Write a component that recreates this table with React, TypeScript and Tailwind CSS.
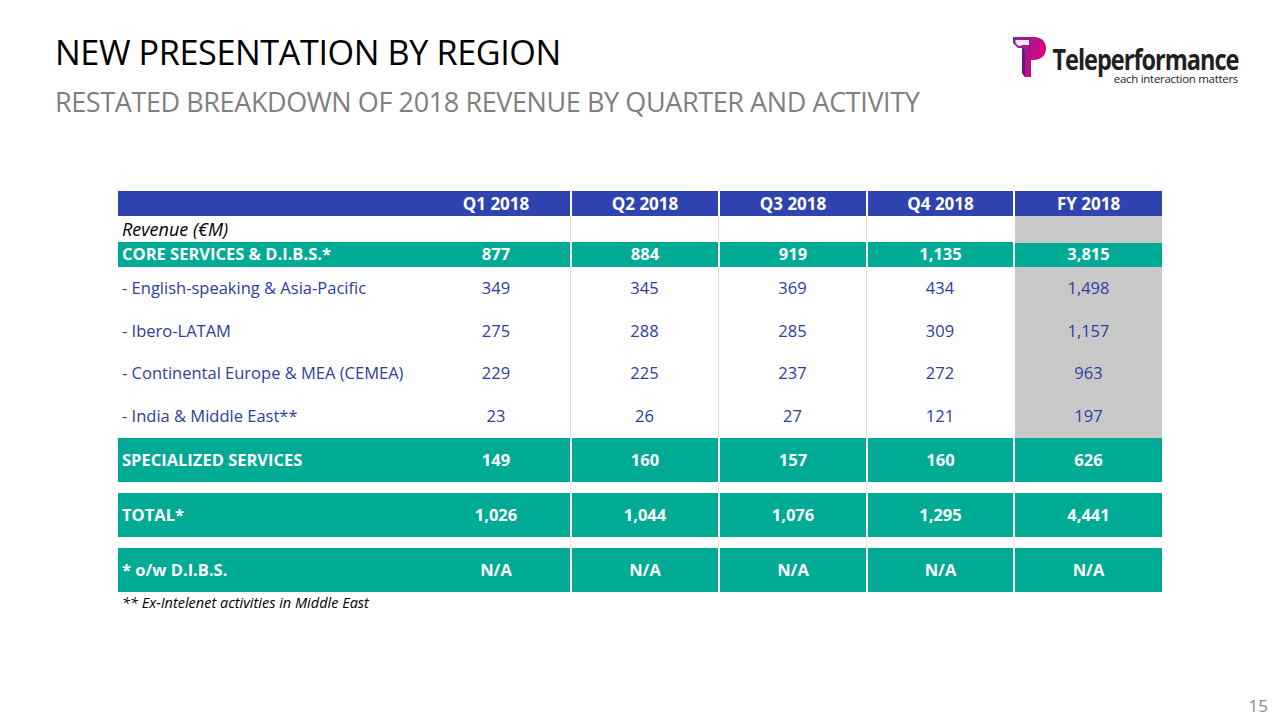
import React from 'react';

const TEAL = 'bg-[#00ab96]';

type Row = {
  label: string;
  values: string[];
  kind: 'teal' | 'plain';
  h: string;
};

const rows: Row[] = [
  { label: 'CORE SERVICES & D.I.B.S.*', values: ['877', '884', '919', '1,135', '3,815'], kind: 'teal', h: 'h-[25px]' },
  { label: '- English-speaking & Asia-Pacific', values: ['349', '345', '369', '434', '1,498'], kind: 'plain', h: 'h-[43px]' },
  { label: '- Ibero-LATAM', values: ['275', '288', '285', '309', '1,157'], kind: 'plain', h: 'h-[42px]' },
  { label: '- Continental Europe & MEA (CEMEA)', values: ['229', '225', '237', '272', '963'], kind: 'plain', h: 'h-[43px]' },
  { label: '- India & Middle East**', values: ['23', '26', '27', '121', '197'], kind: 'plain', h: 'h-[43px]' },
];

const totals = [
  { label: 'SPECIALIZED SERVICES', values: ['149', '160', '157', '160', '626'] },
  { label: 'TOTAL*', values: ['1,026', '1,044', '1,076', '1,295', '4,441'] },
  { label: '* o/w D.I.B.S.', values: ['N/A', 'N/A', 'N/A', 'N/A', 'N/A'] },
];

const cols = 'grid grid-cols-[304px_148px_148px_148px_147px_149px]';

function Logo() {
  return (
    <div className="flex items-start gap-[9px]">
      <svg width="35" height="42" viewBox="0 0 35 42" className="shrink-0">
        <defs>
          <linearGradient id="tp" x1="0" y1="0" x2="1" y2="0.4">
            <stop offset="0" stopColor="#7a2a90" />
            <stop offset="0.55" stopColor="#b0148a" />
            <stop offset="1" stopColor="#e6007e" />
          </linearGradient>
        </defs>
        <path d="M1 1 H22 C30 1 34 6 34 12.5 C34 19 29 24 22 24 H19 V41 H13 L10 37 V12 H6 L1 7 Z" fill="url(#tp)" />
        <path d="M3.5 4 H17 V9 H11 L8 10 H6.5 L3.5 7 Z" fill="#f3e4f2" />
        <path d="M10 12 L13 15 V41 L10 37 Z" fill="#5e1f7a" />
      </svg>
      <div className="w-[182px] flex flex-col items-end pt-[11px]">
        <div className="w-full flex justify-end">
          <span className="whitespace-nowrap font-['Open_Sans',sans-serif] font-bold text-[#231f20] text-[28px] leading-[24px] tracking-[-1.2px] scale-x-[0.84] origin-right">Teleperformance</span>
        </div>
        <span className="mt-[2px] whitespace-nowrap font-['Open_Sans',sans-serif] text-[#231f20] text-[11.5px] leading-[12px] tracking-[-0.3px]">each interaction matters</span>
      </div>
    </div>
  );
}

export default function App() {
  return (
    <div className="relative w-[1280px] h-[720px] bg-white overflow-hidden font-['Open_Sans',sans-serif]">
      <div className="flex justify-between pl-[55px] pr-[42px] pt-[29px]">
        <div>
          <h1 className="text-[34.2px] leading-[46px] text-black tracking-[-0.4px]">NEW PRESENTATION BY REGION</h1>
          <h2 className="mt-[10px] text-[27px] leading-[34px] text-[#7f7f7f] tracking-[-0.4px]">RESTATED BREAKDOWN OF 2018 REVENUE BY QUARTER AND ACTIVITY</h2>
        </div>
        <div className="pt-[7px]">
          <Logo />
        </div>
      </div>

      <div className="ml-[118px] mt-[72px] w-[1044px] text-[16.5px]">
        {/* header */}
        <div className={`${cols} h-[25px] bg-[#2f44b0] text-white font-bold text-[17px]`}>
          <div />
          {['Q1 2018', 'Q2 2018', 'Q3 2018', 'Q4 2018', 'FY 2018'].map((q, i) => (
            <div key={q} className={`flex items-center justify-center ${i > 0 ? 'border-l-2 border-white' : ''}`}>{q}</div>
          ))}
        </div>
        {/* revenue label row */}
        <div className={`${cols} h-[26px]`}>
          <div className="flex items-center pl-[4px] italic text-black text-[18px]">Revenue (€M)</div>
          <div />
          <div className="border-l border-[#dcdcdc]" />
          <div className="border-l border-[#dcdcdc]" />
          <div className="border-l border-[#dcdcdc]" />
          <div className="border-l-2 border-white bg-[#c8c8c8]" />
        </div>
        {rows.map((r) => (
          <div
            key={r.label}
            className={`${cols} ${r.h} ${r.kind === 'teal' ? `${TEAL} text-white font-bold` : 'text-[#2e3d9e]'}`}
          >
            <div className="flex items-center pl-[4px] whitespace-nowrap">{r.label}</div>
            {r.values.map((v, i) => (
              <div
                key={i}
                className={`flex items-center justify-center ${
                  i === 0
                    ? ''
                    : i === 4
                    ? `border-l-2 border-white ${r.kind === 'teal' ? '' : 'bg-[#c8c8c8]'}`
                    : r.kind === 'teal'
                    ? 'border-l-2 border-white'
                    : 'border-l border-[#dcdcdc]'
                }`}
              >
                {v}
              </div>
            ))}
          </div>
        ))}
        {totals.map((t, idx) => (
          <React.Fragment key={t.label}>
            {idx > 0 && (
              <div className={`${cols} h-[11px]`}>
                <div />
                <div />
                <div className="border-l border-[#f3e6e6]" />
                <div className="border-l border-[#f3e6e6]" />
                <div className="border-l border-[#f3e6e6]" />
                <div className="border-l border-[#f3e6e6]" />
              </div>
            )}
            <div className={`${cols} h-[44px] ${TEAL} text-white font-bold`}>
              <div className="flex items-center pl-[4px] whitespace-nowrap">{t.label}</div>
              {t.values.map((v, i) => (
                <div key={i} className={`flex items-center justify-center ${i > 0 ? 'border-l-2 border-white' : ''}`}>
                  {v}
                </div>
              ))}
            </div>
          </React.Fragment>
        ))}
        <div className="pl-[4px] italic text-[14.5px] leading-[22px] text-black">** Ex-Intelenet activities in Middle East</div>
      </div>

      <div className="absolute right-[12px] bottom-[2px] text-[17px] text-[#8c8c8c]">15</div>
    </div>
  );
}
